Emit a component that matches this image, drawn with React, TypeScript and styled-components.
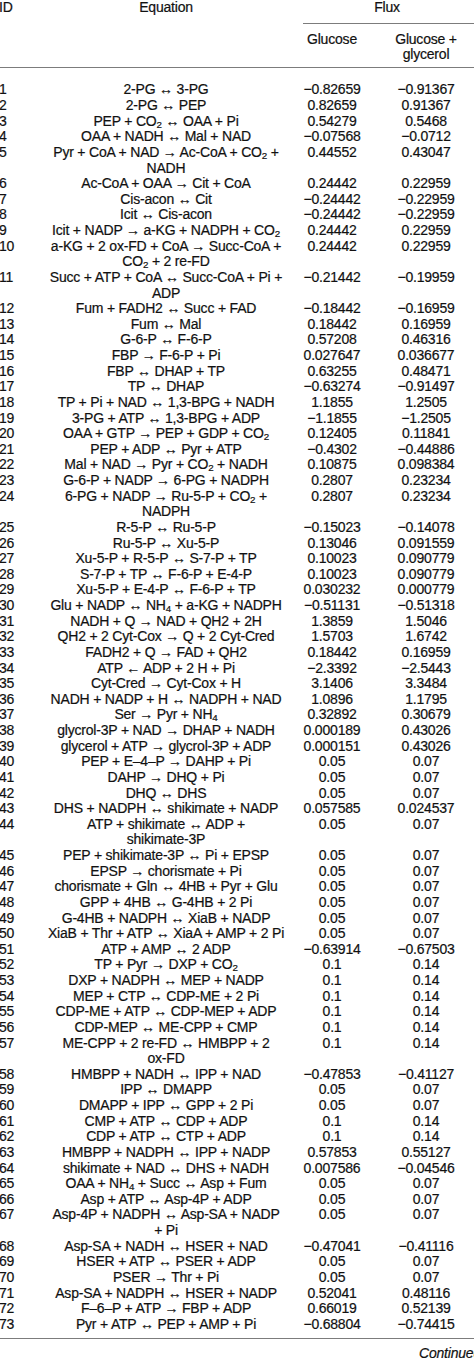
import * as React from "react";
import styled, { createGlobalStyle } from "styled-components";

const GlobalStyle = createGlobalStyle`
  html, body {
    margin: 0;
    padding: 0;
    background: #ffffff;
  }
  body {
    font-family: "Liberation Sans", Arial, sans-serif;
    color: #111111;
  }
`;

const COLS = "40px 254px 78px 110px";
const LINE = "15.63px";

const Page = styled.div`
  width: 474px;
  overflow: hidden;
`;

const Table = styled.div`
  width: 482px;
  margin-left: -1px;
  font-size: 14px;
  letter-spacing: -0.2px;
  line-height: ${LINE};
  -webkit-text-stroke: 0.2px #111111;
`;

const Head = styled.div`
  display: grid;
  grid-template-columns: ${COLS};
  padding-top: 0;
`;

const HeadCell = styled.div<{ $col: string; $align?: string }>`
  grid-column: ${(p) => p.$col};
  text-align: ${(p) => p.$align || "center"};
`;

const FluxRule = styled.div`
  grid-column: 3 / 5;
  margin: 7px 0 0 10px;
  border-top: 1.5px solid #7c7c7c;
`;

const SubHead = styled(HeadCell)`
  margin-top: 8px;
`;

const Rule = styled.div<{ $gap?: number }>`
  margin-top: ${(p) => p.$gap || 0}px;
  border-top: 1.5px solid #7c7c7c;
`;

const Body = styled.div`
  padding: 14.5px 0 6px;
`;

const Row = styled.div`
  display: grid;
  grid-template-columns: ${COLS};
`;

const Id = styled.div`
  text-align: left;
`;

const Equation = styled.div`
  text-align: center;
  white-space: nowrap;
`;

const Value = styled.div`
  text-align: center;
`;

const Sub = styled.sub`
  font-size: 0.7em;
  line-height: 0;
  vertical-align: -0.25em;
`;

const Continued = styled.div`
  margin-top: 7px;
  text-align: right;
  font-style: italic;
  line-height: ${LINE};
`;

type Reaction = [string, string, string];

// "_n" marks a subscript digit, "\n" a line break inside the cell
const reactions: Reaction[] = [
  ["2-PG ↔ 3-PG", "−0.82659", "−0.91367"],
  ["2-PG ↔ PEP", "0.82659", "0.91367"],
  ["PEP + CO_2 ↔ OAA + Pi", "0.54279", "0.5468"],
  ["OAA + NADH ↔ Mal + NAD", "−0.07568", "−0.0712"],
  ["Pyr + CoA + NAD → Ac-CoA + CO_2 +\nNADH", "0.44552", "0.43047"],
  ["Ac-CoA + OAA → Cit + CoA", "0.24442", "0.22959"],
  ["Cis-acon ↔ Cit", "−0.24442", "−0.22959"],
  ["Icit ↔ Cis-acon", "−0.24442", "−0.22959"],
  ["Icit + NADP → a-KG + NADPH + CO_2", "0.24442", "0.22959"],
  ["a-KG + 2 ox-FD + CoA → Succ-CoA +\nCO_2 + 2 re-FD", "0.24442", "0.22959"],
  ["Succ + ATP + CoA ↔  Succ-CoA + Pi +\nADP", "−0.21442", "−0.19959"],
  ["Fum + FADH2  ↔ Succ + FAD", "−0.18442", "−0.16959"],
  ["Fum  ↔ Mal", "0.18442", "0.16959"],
  ["G-6-P ↔ F-6-P", "0.57208", "0.46316"],
  ["FBP → F-6-P + Pi", "0.027647", "0.036677"],
  ["FBP ↔ DHAP + TP", "0.63255", "0.48471"],
  ["TP ↔ DHAP", "−0.63274", "−0.91497"],
  ["TP + Pi + NAD ↔ 1,3-BPG + NADH", "1.1855", "1.2505"],
  ["3-PG + ATP ↔ 1,3-BPG + ADP", "−1.1855", "−1.2505"],
  ["OAA + GTP → PEP + GDP + CO_2", "0.12405", "0.11841"],
  ["PEP + ADP ↔ Pyr + ATP", "−0.4302", "−0.44886"],
  ["Mal + NAD → Pyr + CO_2 + NADH", "0.10875", "0.098384"],
  ["G-6-P + NADP → 6-PG + NADPH", "0.2807", "0.23234"],
  ["6-PG + NADP → Ru-5-P + CO_2 +\nNADPH", "0.2807", "0.23234"],
  ["R-5-P  ↔ Ru-5-P", "−0.15023", "−0.14078"],
  ["Ru-5-P ↔ Xu-5-P", "0.13046", "0.091559"],
  ["Xu-5-P + R-5-P  ↔ S-7-P + TP", "0.10023", "0.090779"],
  ["S-7-P + TP ↔  F-6-P + E-4-P", "0.10023", "0.090779"],
  ["Xu-5-P + E-4-P ↔ F-6-P + TP", "0.030232", "0.000779"],
  ["Glu + NADP ↔ NH_4 + a-KG + NADPH", "−0.51131", "−0.51318"],
  ["NADH + Q → NAD + QH2 + 2H", "1.3859", "1.5046"],
  ["QH2 + 2 Cyt-Cox → Q + 2 Cyt-Cred", "1.5703", "1.6742"],
  ["FADH2 + Q → FAD + QH2", "0.18442", "0.16959"],
  ["ATP ← ADP + 2 H + Pi", "−2.3392", "−2.5443"],
  ["Cyt-Cred → Cyt-Cox + H", "3.1406", "3.3484"],
  ["NADH + NADP + H ↔ NADPH + NAD", "1.0896", "1.1795"],
  ["Ser → Pyr + NH_4", "0.32892", "0.30679"],
  ["glycrol-3P + NAD → DHAP + NADH", "0.000189", "0.43026"],
  ["glycerol + ATP → glycrol-3P + ADP", "0.000151", "0.43026"],
  ["PEP + E–4–P → DAHP + Pi", "0.05", "0.07"],
  ["DAHP → DHQ + Pi", "0.05", "0.07"],
  ["DHQ ↔ DHS", "0.05", "0.07"],
  ["DHS + NADPH ↔ shikimate + NADP", "0.057585", "0.024537"],
  ["ATP + shikimate ↔ ADP +\nshikimate-3P", "0.05", "0.07"],
  ["PEP + shikimate-3P ↔ Pi + EPSP", "0.05", "0.07"],
  ["EPSP → chorismate + Pi", "0.05", "0.07"],
  ["chorismate + Gln ↔ 4HB + Pyr + Glu", "0.05", "0.07"],
  ["GPP + 4HB ↔ G-4HB + 2 Pi", "0.05", "0.07"],
  ["G-4HB + NADPH ↔  XiaB + NADP", "0.05", "0.07"],
  ["XiaB + Thr + ATP ↔ XiaA + AMP + 2 Pi", "0.05", "0.07"],
  ["ATP + AMP ↔ 2 ADP", "−0.63914", "−0.67503"],
  ["TP + Pyr → DXP + CO_2", "0.1", "0.14"],
  ["DXP + NADPH ↔ MEP + NADP", "0.1", "0.14"],
  ["MEP + CTP ↔ CDP-ME + 2 Pi", "0.1", "0.14"],
  ["CDP-ME + ATP ↔ CDP-MEP + ADP", "0.1", "0.14"],
  ["CDP-MEP ↔ ME-CPP + CMP", "0.1", "0.14"],
  ["ME-CPP + 2 re-FD  ↔ HMBPP + 2\nox-FD", "0.1", "0.14"],
  ["HMBPP + NADH  ↔ IPP + NAD", "−0.47853", "−0.41127"],
  ["IPP ↔ DMAPP", "0.05", "0.07"],
  ["DMAPP + IPP ↔ GPP + 2 Pi", "0.05", "0.07"],
  ["CMP + ATP ↔ CDP + ADP", "0.1", "0.14"],
  ["CDP + ATP ↔ CTP + ADP", "0.1", "0.14"],
  ["HMBPP + NADPH  ↔ IPP + NADP", "0.57853", "0.55127"],
  ["shikimate + NAD ↔ DHS + NADH", "0.007586", "−0.04546"],
  ["OAA + NH_4 + Succ ↔ Asp + Fum", "0.05", "0.07"],
  ["Asp + ATP ↔ Asp-4P + ADP", "0.05", "0.07"],
  ["Asp-4P + NADPH ↔ Asp-SA + NADP\n+ Pi", "0.05", "0.07"],
  ["Asp-SA + NADH ↔ HSER + NAD", "−0.47041", "−0.41116"],
  ["HSER + ATP ↔ PSER + ADP", "0.05", "0.07"],
  ["PSER → Thr + Pi", "0.05", "0.07"],
  ["Asp-SA + NADPH  ↔ HSER + NADP", "0.52041", "0.48116"],
  ["F–6–P + ATP → FBP + ADP", "0.66019", "0.52139"],
  ["Pyr + ATP ↔ PEP + AMP + Pi", "−0.68804", "−0.74415"],
];

function renderEquation(text: string) {
  return text.split("\n").map((line, i) => (
    <React.Fragment key={i}>
      {i > 0 && <br />}
      {line.split(/(_\d)/).map((part, j) =>
        part.startsWith("_") ? <Sub key={j}>{part.slice(1)}</Sub> : part
      )}
    </React.Fragment>
  ));
}

export default function App() {
  return (
    <Page>
      <GlobalStyle />
      <Table>
        <Head>
          <HeadCell $col="1" $align="left">ID</HeadCell>
          <HeadCell $col="2">Equation</HeadCell>
          <HeadCell $col="3 / 5">Flux</HeadCell>
          <FluxRule />
          <SubHead $col="3">Glucose</SubHead>
          <SubHead $col="4">
            Glucose +<br />
            glycerol
          </SubHead>
        </Head>
        <Rule $gap={4} />
        <Body>
          {reactions.map(([eq, glc, gly], i) => (
            <Row key={i}>
              <Id>{i + 1}</Id>
              <Equation>{renderEquation(eq)}</Equation>
              <Value>{glc}</Value>
              <Value>{gly}</Value>
            </Row>
          ))}
        </Body>
        <Rule />
        <Continued>Continued</Continued>
      </Table>
    </Page>
  );
}
